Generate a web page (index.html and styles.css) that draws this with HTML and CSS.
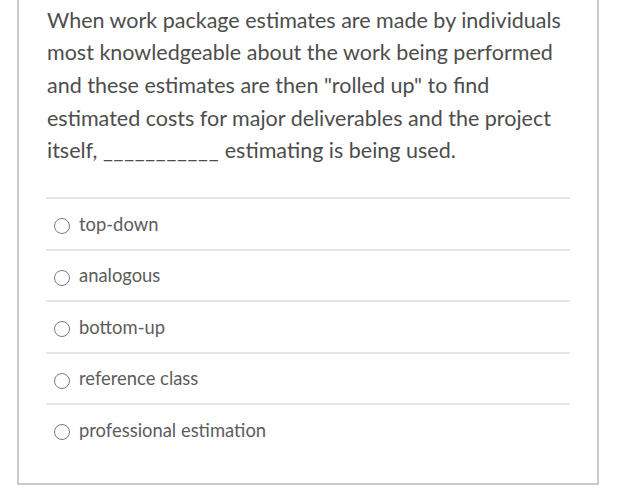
FILE: index.html
```html
<!DOCTYPE html>
<html>
<head>
<meta charset="utf-8">
<link rel="stylesheet" href="styles.css">
</head>
<body>
<div class="card">
  <p class="question">When work package estimates are made by individuals most knowledgeable about the work being performed and these estimates are then "rolled up" to find estimated costs for major deliverables and the project itself, <span class="blank">___________</span> estimating is being used.</p>
  <ul class="options">
    <li class="option"><span class="radio"></span><span class="label">top-down</span></li>
    <li class="option"><span class="radio"></span><span class="label">analogous</span></li>
    <li class="option"><span class="radio"></span><span class="label">bottom-up</span></li>
    <li class="option"><span class="radio"></span><span class="label">reference class</span></li>
    <li class="option"><span class="radio"></span><span class="label">professional estimation</span></li>
  </ul>
</div>
</body>
</html>
```
FILE: styles.css
```css
html, body {
  margin: 0;
  padding: 0;
  background: #fff;
}
body {
  font-family: Lato, "Open Sans", sans-serif;
  width: 644px;
  height: 488px;
  overflow: hidden;
}
.card {
  margin-left: 17px;
  width: 578px;
  height: 483px;
  border: 2px solid #cacaca;
  border-top: none;
  box-sizing: content-box;
}
.question {
  margin: 0;
  padding: 3.5px 27px 0 28px;
  font-size: 21.5px;
  line-height: 32.7px;
  color: #4d4d4d;
}
.blank {
  letter-spacing: 0.7px;
}
.options {
  list-style: none;
  margin: 30px 27px 0 27px;
  padding: 0;
}
.option {
  display: flex;
  align-items: center;
  height: 49.5px;
  border-top: 2px solid #e6e6e6;
  padding-left: 8px;
}
.radio {
  width: 14px;
  height: 14px;
  border: 1.7px solid #7a7a7a;
  border-radius: 50%;
  margin-right: 9px;
  margin-top: 5px;
  flex: none;
}
.label {
  font-size: 18.4px;
  color: #5c5c5c;
}
```
